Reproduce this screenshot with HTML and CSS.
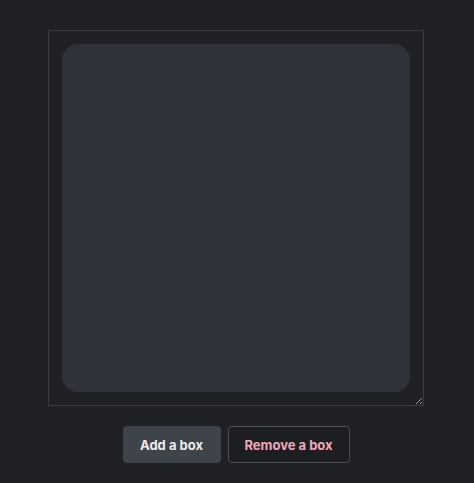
FILE: index.html
```html
<!DOCTYPE html>
<html lang="en">
<head>
    <meta charset="UTF-8">
    <meta name="viewport" content="width=device-width, initial-scale=1.0">
    <title>Boxes</title>
    <link rel="stylesheet" href="styles.css">
</head>
<body>
    <div class="page">
        <div class="container">
            <div class="box"></div>
        </div>
        <div class="actions">
            <button class="btn add-btn">Add a box</button>
            <button class="btn remove-btn">Remove a box</button>
        </div>
    </div>
</body>
</html>
```

FILE: styles.css
```css
* {
    margin: 0;
    padding: 0;
    box-sizing: border-box;
    font-family: Inter, "Noto Sans", Arial, sans-serif;
}

body {
    background: #202124;
    min-height: 100vh;
}

.page {
    display: flex;
    flex-direction: column;
    align-items: center;
    padding-top: 30px;
    padding-right: 2px;
}

.container {
    width: 376px;
    height: 376px;
    border: 1px solid #3b3c40;
    padding: 13px;
    resize: both;
    overflow: auto;
}

.box {
    width: 100%;
    height: 100%;
    background: #2f3239;
    border-radius: 16px;
}

.actions {
    display: flex;
    gap: 7px;
    margin-top: 20px;
}

.btn {
    height: 37px;
    border-radius: 4px;
    font-size: 13px;
    font-weight: 700;
    cursor: pointer;
}

.add-btn {
    width: 98px;
    background: #3f434a;
    color: #ececec;
    border: 1px solid #3f434a;
}

.remove-btn {
    width: 122px;
    background: #1d1e21;
    color: #f3a9bb;
    border: 1px solid #4b4e54;
}
```
